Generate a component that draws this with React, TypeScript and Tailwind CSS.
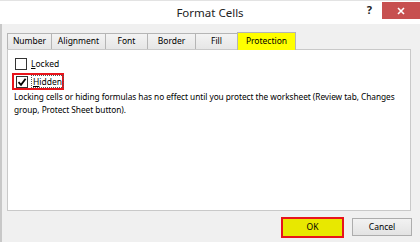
import React from "react";

const tabs = [
  { label: "Number", w: "w-[45px]" },
  { label: "Alignment", w: "w-[55px]" },
  { label: "Font", w: "w-[43px]" },
  { label: "Border", w: "w-[49px]" },
  { label: "Fill", w: "w-[43px]" },
];

function CheckBox({ checked }: { checked?: boolean }) {
  return (
    <div className="w-[12px] h-[12px] border border-[#333] bg-white flex items-center justify-center shrink-0">
      {checked && (
        <svg width="10" height="10" viewBox="0 0 10 10">
          <path d="M1.5 5.2 L4 7.8 L8.6 1.8" fill="none" stroke="#000" strokeWidth="1.8" />
        </svg>
      )}
    </div>
  );
}

export default function App() {
  return (
    <div
      className="w-[420px] h-[242px] overflow-hidden bg-white flex flex-col text-black"
      style={{ fontFamily: '"Noto Sans", "Open Sans", sans-serif' }}
    >
      {/* title bar */}
      <div className="h-[24px] shrink-0 flex items-start relative border-t border-[#e3e3e3]">
        <div className="flex-1 text-center text-[11.5px] pt-[3px] text-[#222]">Format Cells</div>
        <div className="absolute right-[48px] top-[1px] text-[11px] font-bold text-[#222]">?</div>
        <div className="absolute right-0 top-[1px] w-[38px] h-[17px] bg-[#c75050] flex items-center justify-center">
          <svg width="8" height="8" viewBox="0 0 8 8">
            <path d="M1 1 L7 7 M7 1 L1 7" stroke="#fff" strokeWidth="1.6" />
          </svg>
        </div>
      </div>

      {/* body */}
      <div className="flex-1 bg-[#f0f0f0] border-l-2 border-[#c8c8c8] pl-[5px] pr-[9px] pt-[8px] flex flex-col">
        <div className="flex items-end h-[17px] text-[8.5px]">
          {tabs.map((t, i) => (
            <div
              key={t.label}
              className={`${t.w} h-[16px] ${i > 0 ? "-ml-px" : ""} border border-b-0 border-[#b5b5b5] bg-gradient-to-b from-[#f3f3f3] to-[#e6e6e6] flex items-center justify-center`}
            >
              {t.label}
            </div>
          ))}
          <div className="w-[59px] h-[18px] -ml-px -mb-px border border-b-0 border-[#b5b5b5] bg-[#ffff00] flex items-center justify-center relative z-10">
            Protection
          </div>
        </div>

        <div className="h-[162px] bg-white border border-[#c9c9c9] pl-[6px] pt-[8px] text-[8.5px] leading-[12px]">
          <div className="flex items-center gap-[4px] h-[12px] ml-[1px]">
            <CheckBox />
            <span>
              <span className="underline">L</span>ocked
            </span>
          </div>
          <div className="mt-[3px] -ml-[2px] w-[52px] h-[17px] border-2 border-[#e8141b] flex items-center gap-[3px] pl-[2px]">
            <CheckBox checked />
            <span className="border border-dotted border-[#555] px-[1px] leading-[11px]">
              <span className="underline">H</span>idden
            </span>
          </div>
          <p className="mt-[1px] leading-[12.5px] text-[8.3px] tracking-[-0.05px]">
            Locking cells or hiding formulas has no effect until you protect the worksheet (Review tab, Changes
            group, Protect Sheet button).
          </p>
        </div>

        <div className="flex justify-end items-start gap-[8px] mt-[6px] -mr-[1px] text-[8.5px]">
          <div className="w-[63px] h-[21px] border-2 border-[#e8141b] bg-[#e8e800] flex items-center justify-center">
            OK
          </div>
          <div className="w-[60px] h-[18px] mt-[1px] border border-[#adadad] bg-gradient-to-b from-[#f2f2f2] to-[#e3e3e3] flex items-center justify-center">
            Cancel
          </div>
        </div>
      </div>
    </div>
  );
}
